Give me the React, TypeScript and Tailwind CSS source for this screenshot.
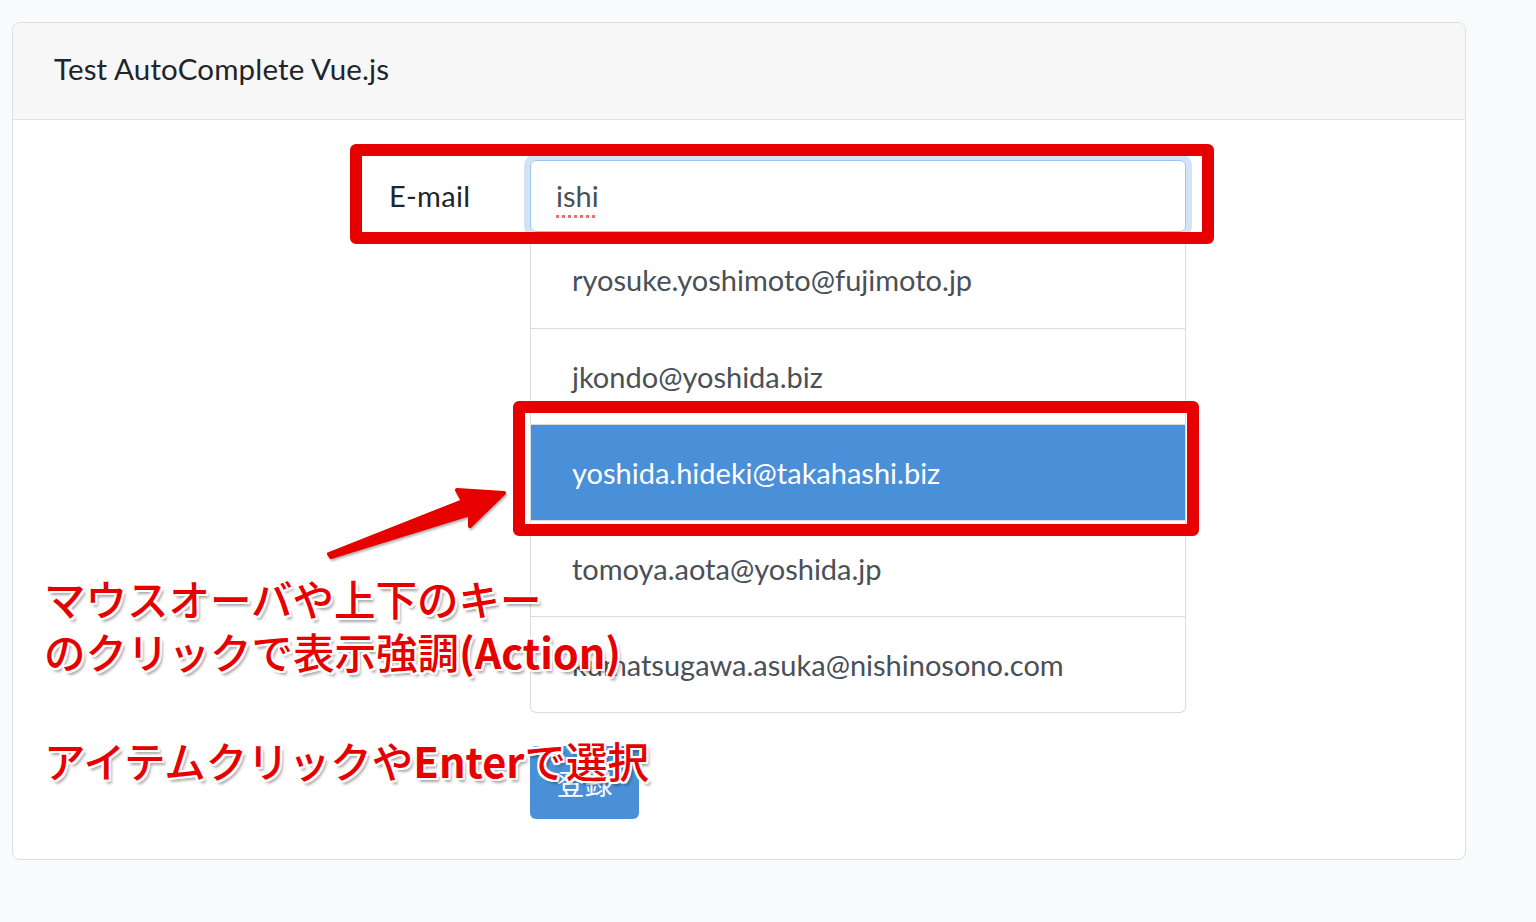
import React from "react";

const emails = [
  "ryosuke.yoshimoto@fujimoto.jp",
  "jkondo@yoshida.biz",
  "yoshida.hideki@takahashi.biz",
  "tomoya.aota@yoshida.jp",
  "kumatsugawa.asuka@nishinosono.com",
];

const uiFont = { fontFamily: "Lato, 'Noto Sans', sans-serif" };
const jpFont = { fontFamily: "'Noto Sans CJK JP', 'Noto Sans', sans-serif" };

const outline =
  "[text-shadow:0_0_2px_#fff,2px_0_0_#fff,-2px_0_0_#fff,0_2px_0_#fff,0_-2px_0_#fff,2px_2px_0_#fff,-2px_-2px_0_#fff,2px_-2px_0_#fff,-2px_2px_0_#fff,3px_4px_3px_rgba(0,0,0,0.35)]";

export default function App() {
  const active = 2;

  return (
    <div className="relative h-[922px] w-full overflow-hidden bg-[#f8fafc]" style={uiFont}>
      <div className="pt-[22px] pl-[12px]">
        {/* カード */}
        <div className="w-[1454px] rounded-[8px] border border-[#dfdfdf] bg-white">
          <div className="flex h-[97px] items-center rounded-t-[8px] border-b border-[#dfdfdf] bg-[#f7f7f7] pb-[4px] pl-[41px]">
            <span className="text-[29.5px] tracking-[0.15px] text-[#212529]">Test AutoComplete Vue.js</span>
          </div>

          <div className="pt-[40px] pb-[40px] pl-[376px]">
            {/* 入力行 */}
            <div className="flex items-center">
              <div className="w-[141px] text-[29px] tracking-[0.3px] text-[#212529]">E-mail</div>
              <div className="flex h-[72px] w-[656px] items-center rounded-[6px] border border-[#9cc4ef] pl-[25px] shadow-[0_0_0_6px_rgba(74,144,217,0.25)]">
                <span className="text-[29px] text-[#495057] underline decoration-[#f26b6b] decoration-dotted decoration-[3px] underline-offset-[8px]">
                  ishi
                </span>
              </div>
            </div>

            {/* 候補リスト */}
            <div className="ml-[141px] w-[656px] overflow-hidden rounded-b-[6px] border border-t-0 border-[#dcdcdc]">
              {emails.map((email, i) => (
                <div
                  key={email}
                  className={`flex h-[96px] items-center pl-[41px] text-[29px] ${
                    i > 0 ? "border-t border-[#dcdcdc]" : ""
                  } ${i === active ? "bg-[#4a90d9] text-white" : "text-[#495057]"}`}
                >
                  {email}
                </div>
              ))}
            </div>

            <button className="mt-[33px] ml-[141px] flex h-[73px] w-[109px] items-center justify-center rounded-[6px] bg-[#4a90d9] text-[28px] text-white" style={jpFont}>
              登録
            </button>
          </div>
        </div>
      </div>

      {/* 注釈: 赤枠 */}
      <div className="pointer-events-none absolute left-[350px] top-[144px] h-[100px] w-[864px] rounded-[6px] border-[12px] border-[#e60000]" />
      <div className="pointer-events-none absolute left-[513px] top-[401px] h-[135px] w-[686px] rounded-[6px] border-[12px] border-[#e60000]" />

      {/* 注釈: 矢印 */}
      <svg
        className="pointer-events-none absolute left-[320px] top-[470px] drop-shadow-[1px_2px_1px_rgba(0,0,0,0.3)]"
        width="200"
        height="100"
        viewBox="0 0 200 100"
      >
        <polygon
          points="9,84 143,31 137,20 184,23 150,56 150,44 11,87"
          fill="#e60000"
          stroke="#e60000"
          strokeWidth="4"
          strokeLinejoin="round"
        />
      </svg>

      {/* 注釈: テキスト */}
      <div className={`pointer-events-none absolute left-[44px] top-[572px] text-[41.5px] leading-[53px] font-medium text-[#e60000] ${outline}`} style={jpFont}>
        <div>マウスオーバや上下のキー</div>
        <div>
          のクリックで表示強調<span className="font-bold">(Action)</span>
        </div>
        <div className="mt-[56px]">
          アイテムクリックや<span className="font-bold">Enter</span>で選択
        </div>
      </div>
    </div>
  );
}
